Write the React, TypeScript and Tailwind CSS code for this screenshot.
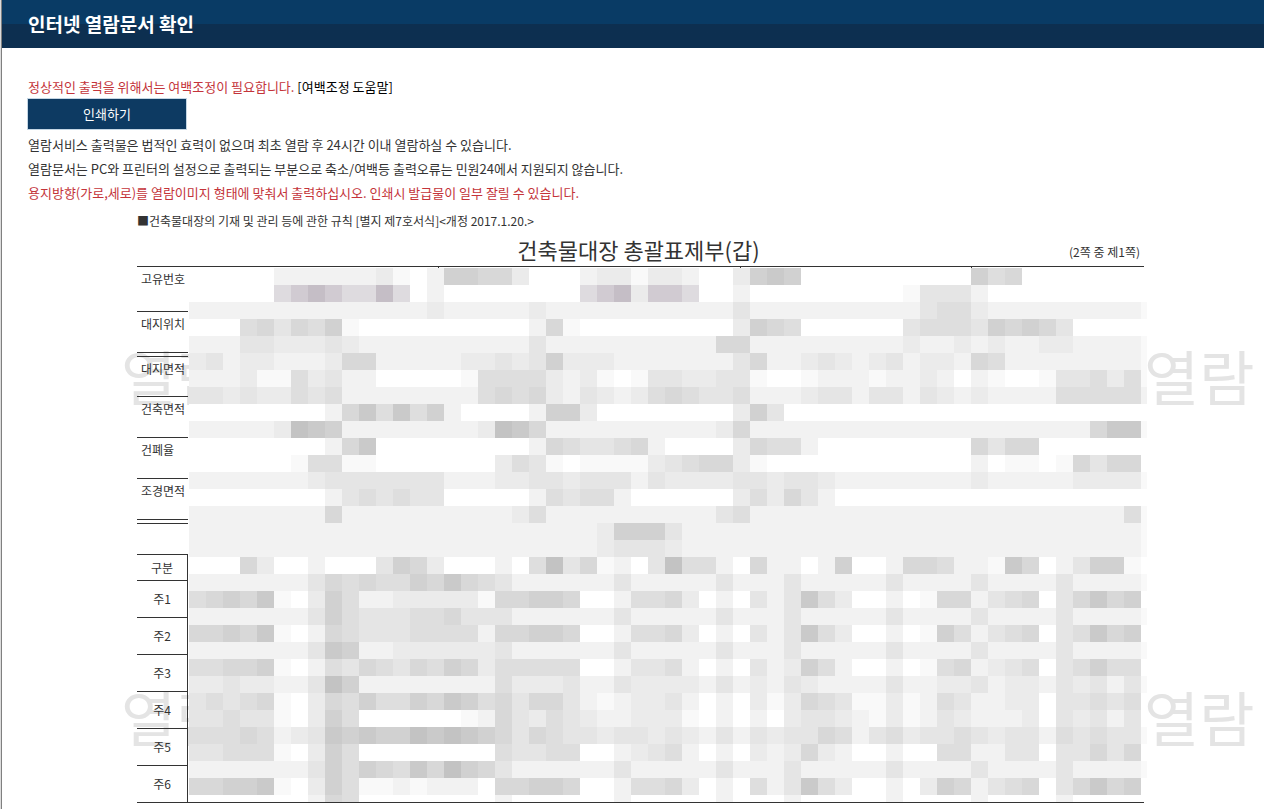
import { FC } from 'react';
import clsx from 'clsx';

type LedgerRow = {
    label?: string;
    height: string;
    centered?: boolean;
    last?: boolean;
};

const rows: LedgerRow[] = [
    { label: '고유번호', height: 'h-[45px]' },
    { label: '대지위치', height: 'h-[41px]' },
    { height: 'h-1' },
    { label: '대지면적', height: 'h-10' },
    { label: '건축면적', height: 'h-[41px]' },
    { label: '건폐율', height: 'h-[41px]' },
    { label: '조경면적', height: 'h-[41px]' },
    { height: 'h-1' },
    { height: 'h-[31px]' },
    { label: '구분', height: 'h-[26px]', centered: true },
    { label: '주1', height: 'h-[37px]', centered: true },
    { label: '주2', height: 'h-[37px]', centered: true },
    { label: '주3', height: 'h-[37px]', centered: true },
    { label: '주4', height: 'h-[37px]', centered: true },
    { label: '주5', height: 'h-[37px]', centered: true },
    { label: '주6', height: 'h-9', centered: true, last: true },
];

// One character per masked block, 0 is blank and 9 the darkest.
const mask = [
    '000002222223102776630002331332003787000000000075600000000',
    '00000abcbaaca0200000000abc3bba002000000000144420000000000',
    '222222222222223222223222222222224222222222245532222222221',
    '000564657100000000002610000000003765000000455547676400000',
    '222443334322222222224222222222266222222222322323223322221',
    '342332223662222233434733322222224622343234233265222222221',
    '222311534220000015555323101443344100122212232021001445351',
    '443433545222222225656324323565445222344244243232222555552',
    '000000002685857200002773000000003740000000000000000000000',
    '222223987222222223986222222222236222222222222222222226881',
    '000000002680000000002654456200003655200000000064660000000',
    '000000155110000000354101111345663100000000000020110164660',
    '222222234444444222334434442433334434432222222232222233331',
    '000000002454544000002545520000003536420000000000000000000',
    '222222226222222222235222222222245222222222222222222222251',
    '222222222222222222222222377742222222222222222222222222221',
    '222222222222222222222222344432222222222222222222222222221',
    '000630020004763000205946120495520622027002665221860247710',
    '222222246565576865422222242222242224222224222242222422221',
    '567681037522333331667760025563020424853002016624560468670',
    '222222247544455644422222242222242224222224222242222422221',
    '667681026544455552667760025563020424853002017524560458670',
    '222222248722333333422222242222242224222224222242222422221',
    '556671025465465763555550024452020423752002015623450457550',
    '334332249722222222533342243333242324322224223342332434241',
    '454561036575576875646642123342020313654113125422330445450',
    '445441037500000012643543223331020203443213124322230434240',
    '555652348787798987646544344343242434465245344543442545441',
    '445551037500000000544550023452020323632002005522440446460',
    '222222247576586976422222242222242224222224222242222422221',
    '667781037511212220667760025563020524853002037624560468670',
    '000000026500000000200000020000020002000002000020000200000',
];

const shades: Record<string, string> = {
    '0': 'bg-white',
    '1': 'bg-[#f9f9f9]',
    '2': 'bg-[#f2f2f2]',
    '3': 'bg-[#ebebeb]',
    '4': 'bg-[#e5e5e5]',
    '5': 'bg-[#dedede]',
    '6': 'bg-[#d8d8d8]',
    '7': 'bg-[#d1d1d1]',
    '8': 'bg-[#cacaca]',
    '9': 'bg-[#c3c3c3]',
    a: 'bg-[#dedbdf]',
    b: 'bg-[#d1cbd2]',
    c: 'bg-[#c5bec6]',
};

const Mask: FC = () => (
    <div aria-hidden="true" className="relative mt-px ml-px shrink-0">
        {mask.map((line, y) => (
            <div
                key={y}
                className={clsx(
                    'flex',
                    y === mask.length - 1 ? 'h-[7px]' : 'h-[17px]'
                )}
            >
                {line.split('').map((shade, x) => (
                    <span
                        key={x}
                        className={clsx(
                            shades[shade],
                            x === line.length - 1 ? 'w-1.5' : 'w-[17px]'
                        )}
                    />
                ))}
            </div>
        ))}
    </div>
);

// The stamp repeats down each margin of the sheet, behind its contents.
const Watermarks: FC<{ className: string }> = ({ className }) => (
    <div
        aria-hidden="true"
        className={clsx(
            'absolute inset-y-0 flex flex-col gap-[281px] pt-[78px] text-6xl leading-[60px] whitespace-nowrap text-[#e4e4e4] select-none',
            className
        )}
    >
        <span>열람</span>
        <span>열람</span>
    </div>
);

const Ledger: FC = () => (
    <div className="relative flex border-y border-[#333]">
        <Watermarks className="-left-4" />
        <Watermarks className="left-full" />
        <div
            aria-hidden="true"
            className="absolute inset-x-0 top-0 grid h-px grid-cols-[302px_302px_231px_1fr] divide-x divide-[#333]"
        >
            <span />
            <span />
            <span />
            <span />
        </div>

        <table className="relative w-[51px] shrink-0 table-fixed border-separate border-spacing-0 text-xs leading-4">
            <tbody>
                {rows.map(({ label, height, centered, last }, i) => (
                    <tr key={i} className={height}>
                        <th
                            scope="row"
                            className={clsx(
                                'border-[#333] p-0 font-normal whitespace-nowrap',
                                !last && 'border-b',
                                centered
                                    ? 'border-r text-center align-middle'
                                    : 'pl-1 text-left align-top',
                                label && !centered && 'pt-1'
                            )}
                        >
                            {label}
                        </th>
                    </tr>
                ))}
            </tbody>
        </table>

        <Mask />
    </div>
);

export default function App() {
    return (
        <div className="min-h-screen overflow-x-hidden border-l border-[#dcdcdc] bg-white font-['Noto_Sans_CJK_KR',sans-serif] text-[13px] text-[#333]">
            <div className="min-h-screen border-l border-[#808080]">
                <header className="flex h-12 items-center bg-linear-to-b from-[#093b65] from-50% to-[#0d2f50] to-50% px-[26px]">
                    <h1 className="text-[19px] leading-6 font-bold text-white">
                        인터넷 열람문서 확인
                    </h1>
                </header>

                <main className="px-[26px] pt-7">
                    <p className="leading-[22px] text-[#c4343a]">
                        정상적인 출력을 위해서는 여백조정이 필요합니다.{' '}
                        <a href="#help" className="text-black">
                            [여백조정 도움말]
                        </a>
                    </p>
                    <button
                        type="button"
                        className="mt-px block h-[30px] w-[158px] bg-[#0d3a62] text-white outline outline-[#c4d6e4]"
                    >
                        인쇄하기
                    </button>
                    <div className="mt-1 leading-6">
                        <p>
                            열람서비스 출력물은 법적인 효력이 없으며 최초 열람 후
                            24시간 이내 열람하실 수 있습니다.
                        </p>
                        <p>
                            열람문서는 PC와 프린터의 설정으로 출력되는 부분으로
                            축소/여백등 출력오류는 민원24에서 지원되지 않습니다.
                        </p>
                        <p className="text-[#c4343a]">
                            용지방향(가로,세로)를 열람이미지 형태에 맞춰서
                            출력하십시오. 인쇄시 발급물이 일부 잘릴 수 있습니다.
                        </p>
                    </div>

                    <section className="mt-2 ml-[109px] w-[1007px]">
                        <p className="text-xs leading-4">
                            ■건축물대장의 기재 및 관리 등에 관한 규칙 [별지
                            제7호서식]&lt;개정 2017.1.20.&gt;
                        </p>
                        <div className="mt-1.5 grid grid-cols-[1fr_auto_1fr] items-center pr-1 pb-[3px]">
                            <h2 className="col-start-2 text-[22px] leading-7">
                                건축물대장 총괄표제부(갑)
                            </h2>
                            <span className="pt-1.5 text-right text-xs leading-4">
                                (2쪽 중 제1쪽)
                            </span>
                        </div>
                        <Ledger />
                    </section>
                </main>
            </div>
        </div>
    );
}
